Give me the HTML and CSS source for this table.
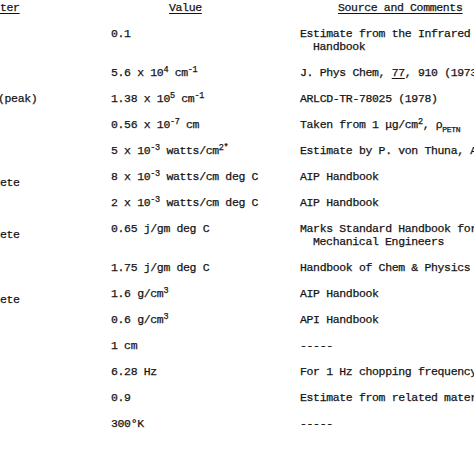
FILE: index.html
```html
<!DOCTYPE html>
<html>
<head>
<meta charset="utf-8">
<link rel="stylesheet" href="styles.css">
</head>
<body>
<div class="sheet">
  <div class="row head">
    <div class="c-param"><span class="ul">ter</span></div>
    <div class="c-val"><span class="ul hv">Value</span></div>
    <div class="c-src"><span class="ul hs">Source and Comments</span></div>
  </div>
  <div class="row">
    <div class="c-param"></div>
    <div class="c-val">0.1</div>
    <div class="c-src">Estimate from the Infrared<br><span class="ind">Handbook</span></div>
  </div>
  <div class="row">
    <div class="c-param"></div>
    <div class="c-val">5.6 x 10<sup>4</sup> cm<sup>-1</sup></div>
    <div class="c-src">J. Phys Chem, <span class="ul">77</span>, 910 (1973)</div>
  </div>
  <div class="row">
    <div class="c-param peak">(peak)</div>
    <div class="c-val">1.38 x 10<sup>5</sup> cm<sup>-1</sup></div>
    <div class="c-src">ARLCD-TR-78025 (1978)</div>
  </div>
  <div class="row">
    <div class="c-param"></div>
    <div class="c-val">0.56 x 10<sup>-7</sup> cm</div>
    <div class="c-src">Taken from 1 μg/cm<sup>2</sup>, ρ<sub>PETN</sub></div>
  </div>
  <div class="row">
    <div class="c-param"></div>
    <div class="c-val">5 x 10<sup>-3</sup> watts/cm<sup>2*</sup></div>
    <div class="c-src">Estimate by P. von Thuna, AFAL</div>
  </div>
  <div class="row">
    <div class="c-param low">ete</div>
    <div class="c-val">8 x 10<sup>-3</sup> watts/cm deg C</div>
    <div class="c-src">AIP Handbook</div>
  </div>
  <div class="row">
    <div class="c-param"></div>
    <div class="c-val">2 x 10<sup>-3</sup> watts/cm deg C</div>
    <div class="c-src">AIP Handbook</div>
  </div>
  <div class="row">
    <div class="c-param low">ete</div>
    <div class="c-val">0.65 j/gm deg C</div>
    <div class="c-src">Marks Standard Handbook for<br><span class="ind">Mechanical Engineers</span></div>
  </div>
  <div class="row">
    <div class="c-param"></div>
    <div class="c-val">1.75 j/gm deg C</div>
    <div class="c-src">Handbook of Chem &amp; Physics</div>
  </div>
  <div class="row">
    <div class="c-param low">ete</div>
    <div class="c-val">1.6 g/cm<sup>3</sup></div>
    <div class="c-src">AIP Handbook</div>
  </div>
  <div class="row">
    <div class="c-param"></div>
    <div class="c-val">0.6 g/cm<sup>3</sup></div>
    <div class="c-src">API Handbook</div>
  </div>
  <div class="row">
    <div class="c-param"></div>
    <div class="c-val">1 cm</div>
    <div class="c-src">-----</div>
  </div>
  <div class="row">
    <div class="c-param"></div>
    <div class="c-val">6.28 Hz</div>
    <div class="c-src">For 1 Hz chopping frequency</div>
  </div>
  <div class="row">
    <div class="c-param"></div>
    <div class="c-val">0.9</div>
    <div class="c-src">Estimate from related materials</div>
  </div>
  <div class="row">
    <div class="c-param"></div>
    <div class="c-val">300°K</div>
    <div class="c-src">-----</div>
  </div>
</div>
</body>
</html>
```
FILE: styles.css
```css
html, body {
  margin: 0;
  padding: 0;
  background: #ffffff;
}
body {
  width: 474px;
  height: 474px;
  overflow: hidden;
}
.sheet {
  font-family: "Liberation Mono", "DejaVu Sans Mono", monospace;
  font-size: 11.5px;
  letter-spacing: -0.35px;
  line-height: 13px;
  color: #141414;
  -webkit-text-stroke: 0.25px #141414;
  white-space: nowrap;
  display: flex;
  flex-direction: column;
  gap: 13px;
  padding-top: 1px;
}
.row {
  display: grid;
  grid-template-columns: 111px 189px minmax(0, 1fr);
}
.c-param, .c-val, .c-src {
  min-width: 0;
}
.hv {
  margin-left: 58px;
}
.hs {
  margin-left: 38px;
}
.ul {
  text-decoration: underline;
  text-underline-offset: 2px;
}
.ind {
  padding-left: 13px;
}
.peak {
  margin-left: -2px;
}
.low {
  padding-top: 6px;
  margin-bottom: -6px;
}
sup {
  font-size: 8.5px;
  line-height: 0;
  vertical-align: 4px;
}
sub {
  font-size: 8px;
  line-height: 0;
  vertical-align: -4px;
}
```
